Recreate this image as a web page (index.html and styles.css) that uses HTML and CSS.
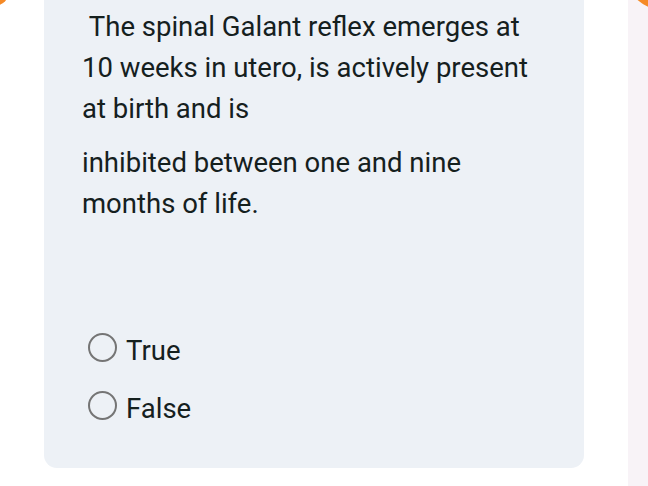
FILE: index.html
```html
<!DOCTYPE html>
<html>
<head>
<meta charset="utf-8">
<link rel="stylesheet" href="styles.css">
</head>
<body>
<div class="page">
  <main class="main">
    <section class="card">
      <p class="q q-first">&nbsp;The spinal Galant reflex emerges at<br>10 weeks in utero, is actively present<br>at birth and is</p>
      <p class="q q-second">inhibited between one and nine<br>months of life.</p>
      <div class="options">
        <label class="opt"><span class="radio"></span><span class="opt-text">True</span></label>
        <label class="opt"><span class="radio"></span><span class="opt-text">False</span></label>
      </div>
    </section>
  </main>
  <aside class="side"></aside>
  <span class="blob blob-left"></span>
  <span class="blob blob-right"></span>
</div>
</body>
</html>
```

FILE: styles.css
```css
html, body {
  margin: 0;
  padding: 0;
  background: #ffffff;
}
.page {
  position: relative;
  width: 648px;
  height: 486px;
  overflow: hidden;
  display: flex;
  font-family: Roboto, "Noto Sans", sans-serif;
  color: #15201e;
}
.main {
  flex: 1;
  padding-left: 44px;
  padding-right: 44px;
}
.side {
  width: 20px;
  background: #f8f3f7;
}
.card {
  margin-top: -20px;
  height: 488px;
  box-sizing: border-box;
  padding: 26px 10px 0 38px;
  background: #edf1f6;
  border-radius: 0 0 13px 13px;
}
.q {
  margin: 0;
  font-size: 27.5px;
  line-height: 41px;
  white-space: nowrap;
}
.q-second {
  margin-top: 13px;
}
.options {
  margin-top: 105px;
  display: flex;
  flex-direction: column;
  gap: 16px;
  padding-left: 6px;
}
.opt {
  display: flex;
  align-items: center;
  gap: 9px;
  height: 42px;
}
.radio {
  width: 25px;
  height: 25px;
  border: 2px solid #757575;
  border-radius: 50%;
  box-sizing: content-box;
  margin-top: -5px;
}
.opt-text {
  font-size: 27.5px;
}
.blob {
  position: absolute;
  border-radius: 50%;
  background: #f58a26;
}
.blob-left {
  width: 40px;
  height: 40px;
  left: -29px;
  top: -33px;
}
.blob-right {
  width: 80px;
  height: 80px;
  left: 624px;
  top: -70px;
}
```
